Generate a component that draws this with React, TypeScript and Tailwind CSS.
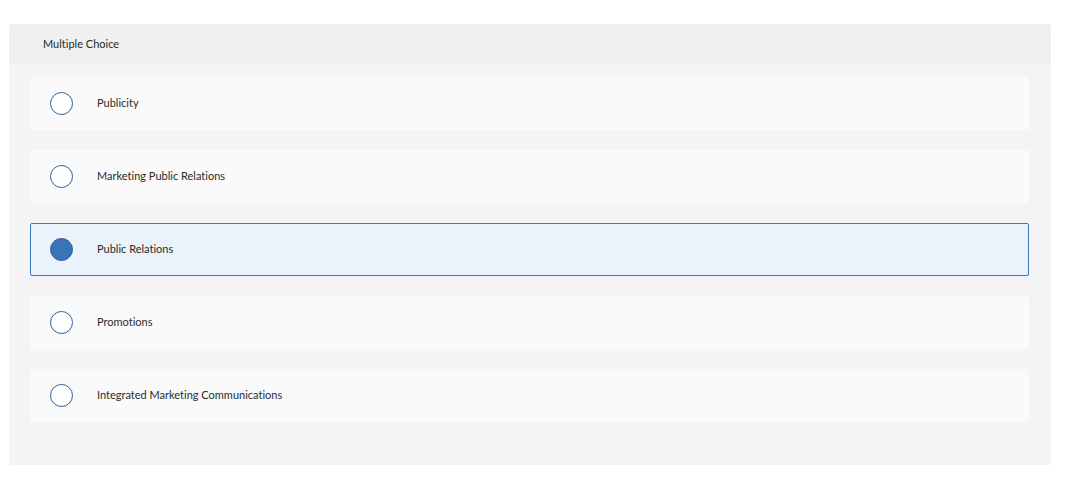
import React from "react";

const options = [
  "Publicity",
  "Marketing Public Relations",
  "Public Relations",
  "Promotions",
  "Integrated Marketing Communications",
];

export default function App() {
  const selected = 2;
  return (
    <div className="w-[1078px] h-[493px] bg-white pt-[24px] pl-[9px] [font-variant-ligatures:none]" style={{ fontFamily: "Lato, 'Open Sans', sans-serif" }}>
      <div className="w-[1042px] h-[441px] rounded-[3px] bg-[#f4f4f4] overflow-hidden flex flex-col">
        <div className="h-[40px] bg-[#f0f0f0] flex items-center pl-[34px] text-[11px] text-[#2a2a2a]">
          Multiple Choice
        </div>
        <div className="flex flex-col gap-[20px] pt-[13px] pl-[21px] pr-[22px]">
          {options.map((o, i) => {
            const sel = i === selected;
            return (
              <div
                key={o}
                className={
                  sel
                    ? "h-[53px] rounded-[2px] bg-[#eaf2fb] border border-[#3a77c0] flex items-center pl-[19px]"
                    : "h-[53px] rounded-[2px] bg-[#fafafa] border border-transparent flex items-center pl-[19px]"
                }
              >
                {sel ? (
                  <div className="w-[23px] h-[23px] rounded-full bg-[#3a74b8] border border-[#2d5f99] shrink-0" />
                ) : (
                  <div className="w-[23px] h-[23px] rounded-full bg-white border border-[#2f5f94] shrink-0" />
                )}
                <span className="ml-[24px] text-[11px] text-[#2a2a2a]">{o}</span>
              </div>
            );
          })}
        </div>
      </div>
    </div>
  );
}
